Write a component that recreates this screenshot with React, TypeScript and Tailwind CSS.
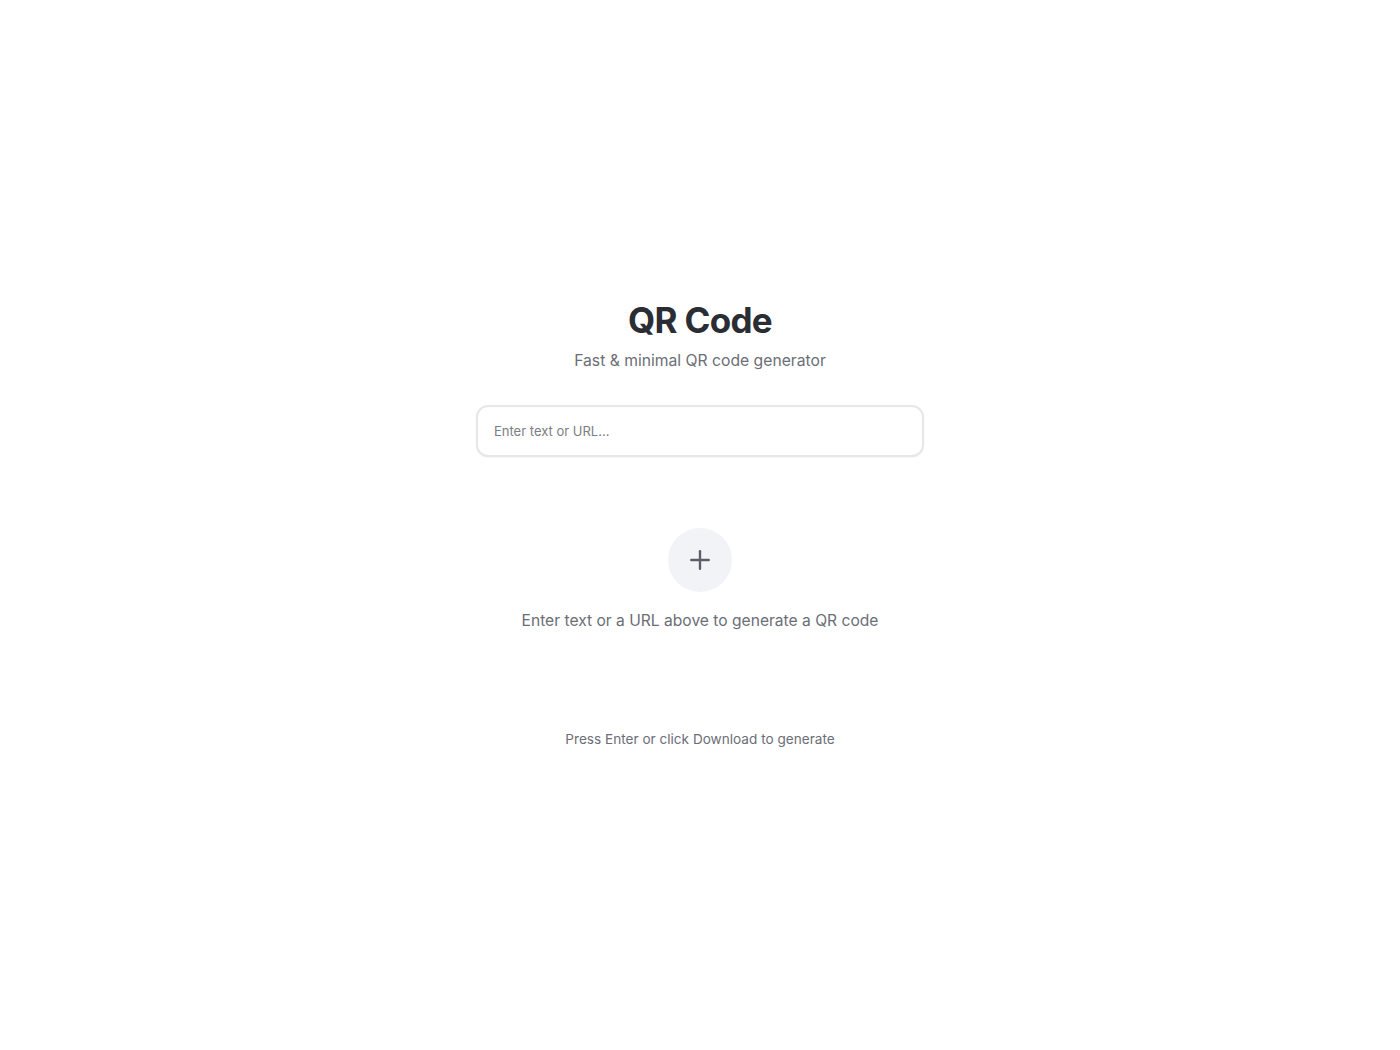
import { useState } from 'react';
import { Plus } from 'lucide-react';

export default function App() {
  const [text, setText] = useState('');

  return (
    <div className="min-h-screen bg-white flex items-center justify-center font-['Inter',sans-serif]">
      <div className="w-full max-w-[448px] pb-[2px] flex flex-col items-center">
        {/* Header */}
        <h1 className="text-[35px] leading-[44px] font-bold tracking-[-0.02em] text-[#2a2d34]">QR Code</h1>
        <p className="mt-[7px] text-[15.7px] text-[#6b6e76]">Fast &amp; minimal QR code generator</p>

        {/* Input */}
        <input
          value={text}
          onChange={(e) => setText(e.target.value)}
          placeholder="Enter text or URL..."
          className="mt-[32px] w-full h-[52px] px-4 rounded-xl border-2 border-[#e6e7ea] bg-white text-[13px] text-[#2a2d34] placeholder:text-[#7a7d85] outline-none shadow-[0_1px_2px_rgba(0,0,0,0.04)]"
        />

        {/* Empty state */}
        <div className="mt-[71px] flex flex-col items-center">
          <div className="w-16 h-16 rounded-full bg-[#f1f3f6] flex items-center justify-center">
            <Plus size={30} strokeWidth={1.9} className="text-[#5c5f69]" />
          </div>
          <p className="mt-[17px] text-[15.6px] text-[#6b6e76]">Enter text or a URL above to generate a QR code</p>
        </div>

        <p className="mt-[97px] text-[13.6px] text-[#6b6e76]">Press Enter or click Download to generate</p>
      </div>
    </div>
  );
}
